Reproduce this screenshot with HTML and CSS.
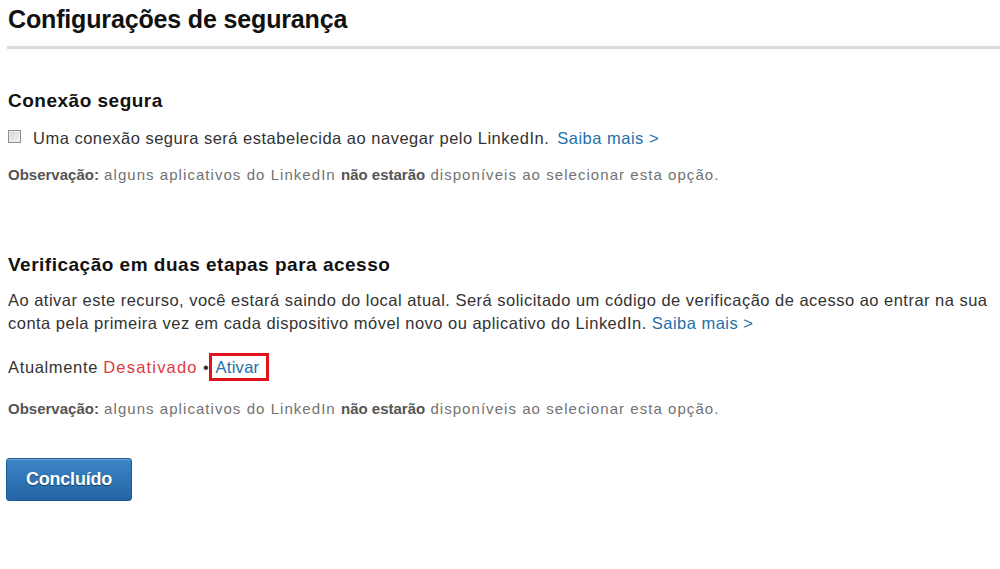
FILE: index.html
```html
<!DOCTYPE html>
<html lang="pt">
<head>
<meta charset="utf-8">
<title>Configurações de segurança</title>
<link rel="stylesheet" href="styles.css">
</head>
<body>
<div class="page">
  <h1 class="title">Configurações de segurança</h1>
  <div class="rule"></div>

  <section class="section first">
    <h2 class="heading">Conexão segura</h2>
    <label class="check-row">
      <span class="checkbox"></span>
      <span class="check-text">Uma conexão segura será estabelecida ao navegar pelo LinkedIn.</span>
      <a class="link more" href="#">Saiba mais &gt;</a>
    </label>
    <p class="note"><b>Observação:</b> alguns aplicativos do LinkedIn <b>não estarão</b> disponíveis ao selecionar esta opção.</p>
  </section>

  <section class="section second">
    <h2 class="heading">Verificação em duas etapas para acesso</h2>
    <p class="desc">Ao ativar este recurso, você estará saindo do local atual. Será solicitado um código de verificação de acesso ao entrar na sua conta pela primeira vez em cada dispositivo móvel novo ou aplicativo do LinkedIn. <a class="link" href="#">Saiba mais &gt;</a></p>
    <p class="status">Atualmente <span class="off">Desativado</span> <span class="dot">•</span><a class="link activate" href="#">Ativar</a></p>
    <p class="note note-second"><b>Observação:</b> alguns aplicativos do LinkedIn <b>não estarão</b> disponíveis ao selecionar esta opção.</p>
  </section>

  <button class="done" type="button">Concluído</button>
</div>
</body>
</html>
```

FILE: styles.css
```css
html, body {
  margin: 0;
  padding: 0;
  background: #ffffff;
}

body {
  font-family: "Liberation Sans", Arial, sans-serif;
  color: #333333;
}

.page {
  padding: 4px 0 0 8px;
}

.title {
  margin: 0;
  font-size: 25px;
  line-height: 30px;
  font-weight: bold;
  letter-spacing: -0.15px;
  color: #111111;
}

.rule {
  margin: 12px 0 0 -1px;
  height: 3px;
  background: #dadada;
  box-shadow: 0 0 1px #e8e8e8;
}

.heading {
  margin: 0;
  font-size: 19px;
  line-height: 22px;
  font-weight: bold;
  letter-spacing: 0.5px;
  color: #111111;
}

.section.first {
  margin-top: 41px;
}

.section.second {
  margin-top: 70px;
}

.check-row {
  display: flex;
  align-items: flex-start;
  margin-top: 16px;
  font-size: 16.5px;
  line-height: 20px;
  letter-spacing: 0.5px;
  color: #333333;
}

.checkbox {
  width: 11px;
  height: 11px;
  margin-top: 2px;
  margin-right: 12px;
  border: 1px solid #8f8f8f;
  background: linear-gradient(135deg, #d4d4d4, #f4f4f4);
  box-shadow: inset 0 0 0 1px #efefef;
  flex: none;
}

.more {
  margin-left: 8px;
  letter-spacing: 0.5px;
}

.link {
  color: #2470a8;
  text-decoration: none;
}

.note {
  margin: 18px 0 0 0;
  font-size: 15px;
  line-height: 18px;
  letter-spacing: 1.05px;
  color: #727272;
}

.note b {
  color: #555555;
  letter-spacing: 0;
}

.desc {
  margin: 13px 0 0 0;
  font-size: 16.5px;
  line-height: 23px;
  letter-spacing: 0.48px;
  color: #333333;
}

.status {
  margin: 18px 0 0 0;
  font-size: 16.5px;
  line-height: 22px;
  letter-spacing: 0.65px;
  color: #333333;
}

.off {
  color: #e0393e;
  letter-spacing: 1.2px;
}

.dot {
  color: #333333;
}

.activate {
  display: inline-block;
  border: 3px solid #e0121c;
  padding: 0 7px 0 3px;
  line-height: 22px;
  letter-spacing: 0.3px;
}

.note-second {
  margin-top: 19px;
}

.done {
  display: block;
  margin: 40px 0 0 -2px;
  width: 126px;
  height: 43px;
  padding: 0;
  border: 1px solid #1b5a94;
  border-radius: 3px;
  background: linear-gradient(#3c86c7, #2364a4);
  color: #ffffff;
  font-family: "Liberation Sans", Arial, sans-serif;
  font-size: 18px;
  font-weight: bold;
  letter-spacing: -0.2px;
  text-shadow: 0 1px 1px rgba(0, 0, 0, 0.45);
  box-shadow: inset 0 1px 0 rgba(255, 255, 255, 0.25);
  cursor: pointer;
}
```
